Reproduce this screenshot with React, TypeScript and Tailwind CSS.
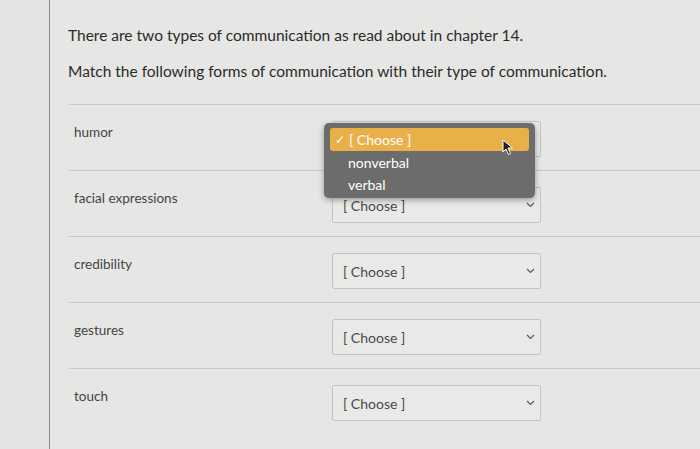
import React from "react";

const rows = ["humor", "facial expressions", "credibility", "gestures", "touch"];

function Chevron() {
  return (
    <svg width="9" height="6" viewBox="0 0 9 6" className="absolute right-[5px] top-1/2 -translate-y-1/2">
      <path d="M1 1 L4.5 4.5 L8 1" fill="none" stroke="#5a5a5a" strokeWidth="1.2" />
    </svg>
  );
}

function Select({ hidden }: { hidden?: boolean }) {
  return (
    <div className="relative w-[209px] h-[36px] border border-[#c4c4c2] rounded-[2px] bg-[#e9e9e7] flex items-center pl-[10px] text-[14px] text-[#4a4a4a]">
      {!hidden && "[ Choose ]"}
      <Chevron />
    </div>
  );
}

export default function App() {
  return (
    <div
      className="w-[700px] h-[449px] overflow-hidden bg-[#e6e6e4] relative flex"
      style={{ fontFamily: "Lato, 'Open Sans', sans-serif" }}
    >
      <div className="w-[50px] shrink-0 border-r border-[#8e8e8c] bg-[#e3e3e1]" />
      <div className="flex-1 flex flex-col">
        <div className="pl-[18px] pt-[24px] text-[15.5px] text-[#2b2b2b] leading-[22px]">
          <p>There are two types of communication as read about in chapter 14.</p>
          <p className="mt-[14px]">Match the following forms of communication with their type of communication.</p>
        </div>
        <div className="ml-[19px] mt-[22px] border-t border-[#c8c8c6]">
          {rows.map((r, i) => (
            <div
              key={r}
              className={`h-[66px] flex ${i < rows.length - 1 ? "border-b border-[#c8c8c6]" : ""}`}
            >
              <div className="w-[263px] pl-[5px] pt-[19px] text-[13.5px] text-[#444] leading-[16px]">{r}</div>
              <div className="pt-[16px]">
                <Select hidden={i === 0} />
              </div>
            </div>
          ))}
        </div>
      </div>

      {/* dropdown menu */}
      <div className="absolute left-[324px] top-[123px] w-[211px] h-[75px] rounded-[5px] bg-[#6c6c6c] shadow-[0_2px_6px_rgba(0,0,0,0.35)] px-[6px] pt-[5px] text-[14px] text-white">
        <div className="h-[23px] rounded-[3px] bg-[#e9b04a] flex items-center pl-[5px]">
          <span className="text-[12px] mr-[4px]">✓</span>[ Choose ]
        </div>
        <div className="h-[22px] flex items-center pl-[18px]">nonverbal</div>
        <div className="h-[22px] flex items-center pl-[18px]">verbal</div>
      </div>

      {/* cursor */}
      <svg className="absolute left-[502px] top-[139px]" width="12" height="17" viewBox="0 0 12 17">
        <path d="M1 1 L1 13 L4 10 L6.5 15.5 L8.5 14.5 L6 9 L10.5 9 Z" fill="#222" stroke="#fff" strokeWidth="1" />
      </svg>
    </div>
  );
}
